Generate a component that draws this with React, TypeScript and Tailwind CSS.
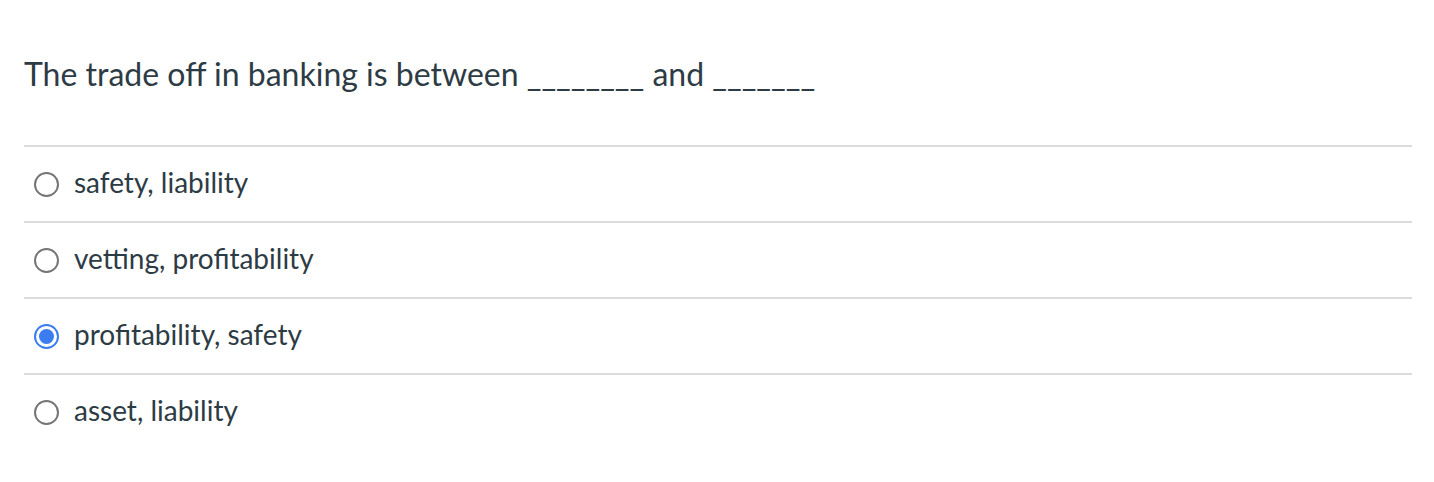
import { useState } from 'react'

const answers = [
  'safety, liability',
  'vetting, profitability',
  'profitability, safety',
  'asset, liability',
]

function Radio({ checked }: { checked: boolean }) {
  if (checked) {
    return (
      <span className="flex h-[25px] w-[25px] shrink-0 items-center justify-center rounded-full border-2 border-[#3b7df0] bg-white">
        <span className="h-[15px] w-[15px] rounded-full bg-[#3b7df0]" />
      </span>
    )
  }
  return <span className="h-[25px] w-[25px] shrink-0 rounded-full border-2 border-[#757575] bg-white" />
}

export default function App() {
  const [selected, setSelected] = useState(2)

  return (
    <div className="min-h-[482px] bg-white pl-6 pr-[22px] pt-[51px] font-['Lato','Noto_Sans',sans-serif] text-[#2d3b45]">
      {/* Question */}
      <p className="h-[94px] text-[32px] leading-[46px]">
        The trade off in banking is between ________ and _______
      </p>

      {/* Answers */}
      <div>
        {answers.map((answer, index) => (
          <div
            key={index}
            className="flex h-[76px] cursor-pointer items-center gap-[15px] border-t-2 border-[#dcdcdc] pl-[10px]"
            onClick={() => setSelected(index)}
          >
            <Radio checked={selected === index} />
            <span className="-mt-[4px] text-[28px] leading-[40px]">{answer}</span>
          </div>
        ))}
      </div>
    </div>
  )
}
